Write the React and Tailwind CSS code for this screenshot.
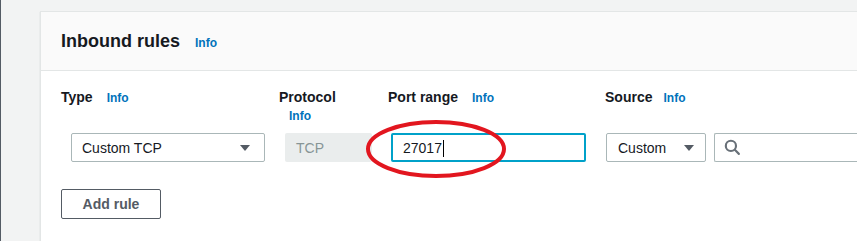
import React from "react";

const Info = ({ className = "" }) => (
  <span className={"text-[12px] font-bold text-[#0073bb] leading-none " + className}>Info</span>
);

const Caret = () => (
  <svg width="12" height="8" viewBox="0 0 12 8"><path d="M1 1h10L6 7z" fill="#545b64" /></svg>
);

export default function App() {
  return (
    <div className="w-[857px] h-[241px] overflow-hidden flex bg-[#f2f3f3] border-l border-[#545b64]" style={{ fontFamily: '"Liberation Sans", Arial, sans-serif' }}>
      <div className="ml-[39px] mt-[11px] flex-1 min-w-0 bg-white border-l border-t border-[#e3e6e6] shadow-[0_1px_1px_rgba(0,28,36,0.2)]">
        <div className="h-[59px] bg-[#fafafa] border-b border-[#e3e6e6] flex items-center pl-[20px] pt-[1px]">
          <span className="text-[18px] font-bold text-[#16191f]">Inbound rules</span>
          <Info className="ml-[15px] mt-[3px]" />
        </div>
        <div className="pl-[20px] pt-[15px] text-[#16191f]">
          <div className="grid grid-cols-[218px_109px_217px_1fr] h-[47px]">
            <div className="flex items-start pt-[1px]">
              <span className="text-[14px] font-bold leading-[20px]">Type</span>
              <Info className="ml-[14px] mt-[5px]" />
            </div>
            <div className="flex flex-col items-start pt-[1px]">
              <span className="text-[14px] font-bold leading-[20px]">Protocol</span>
              <Info className="ml-[10px] mt-[3px]" />
            </div>
            <div className="flex items-start pt-[1px]">
              <span className="text-[14px] font-bold leading-[20px]">Port range</span>
              <Info className="ml-[14px] mt-[5px]" />
            </div>
            <div className="flex items-start pt-[1px]">
              <span className="text-[14px] font-bold leading-[20px]">Source</span>
              <Info className="ml-[11px] mt-[5px]" />
            </div>
          </div>
          <div className="grid grid-cols-[218px_109px_217px_1fr] h-[29px]">
            <div className="pl-[10px]">
              <div className="w-[194px] h-[29px] border border-[#aab7b8] rounded-[2px] flex items-center justify-between pl-[10px] pr-[13px] pt-[1px] text-[14px]">
                <span>Custom TCP</span>
                <Caret />
              </div>
            </div>
            <div className="pl-[6px]">
              <div className="w-[87px] h-[29px] bg-[#eaeded] rounded-[2px] flex items-center pl-[11px] pt-[1px] text-[14px] text-[#879596]">TCP</div>
            </div>
            <div className="pl-[3px] relative">
              <div className="w-[195px] h-[29px] border-2 border-[#00a1c9] rounded-[2px] flex items-center pl-[10px] pt-[1px] text-[14px]">
                <span>27017</span>
                <span className="w-[1px] h-[17px] bg-black ml-[1px]" />
              </div>
              <svg className="absolute left-[-23px] top-[-13px] overflow-visible" width="144" height="62" viewBox="0 0 144 62">
                <ellipse cx="71" cy="29" rx="68" ry="27" fill="none" stroke="#e2161f" strokeWidth="4" />
              </svg>
            </div>
            <div className="flex pl-[1px] gap-[8px]">
              <div className="w-[100px] h-[29px] border border-[#aab7b8] rounded-[2px] flex items-center justify-between pl-[11px] pr-[10px] pt-[1px] text-[14px]">
                <span>Custom</span>
                <Caret />
              </div>
              <div className="w-[200px] h-[29px] border border-[#aab7b8] border-r-0 rounded-l-[2px] flex items-center pl-[9px]">
                <svg width="17" height="17" viewBox="0 0 16 16" fill="none" stroke="#687078" strokeWidth="2" strokeLinecap="round">
                  <circle cx="6.5" cy="6.5" r="4.8" />
                  <path d="M10.2 10.2l3.8 3.8" />
                </svg>
              </div>
            </div>
          </div>
          <div className="mt-[27px]">
            <div className="w-[100px] h-[30px] border border-[#545b64] rounded-[2px] flex items-center justify-center text-[14px] font-bold text-[#545b64]">Add rule</div>
          </div>
        </div>
      </div>
    </div>
  );
}
